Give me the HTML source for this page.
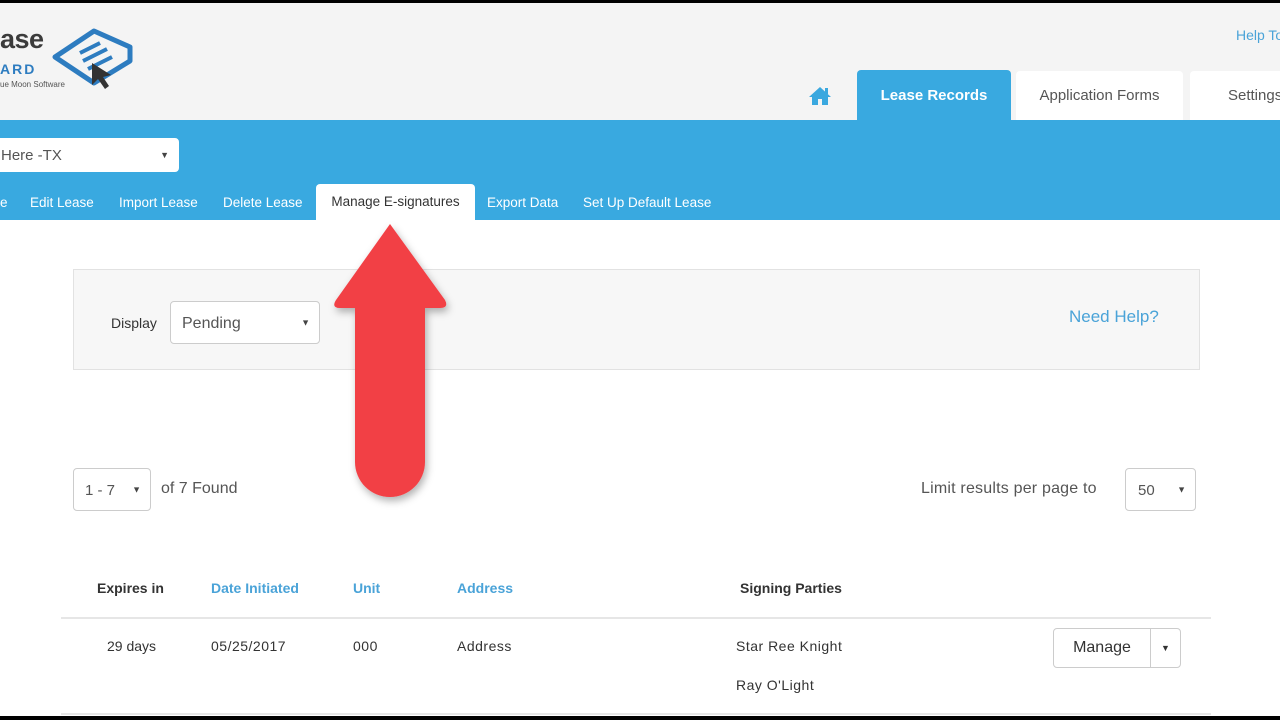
<!DOCTYPE html>
<html><head><style>
*{box-sizing:border-box;margin:0;padding:0}
body{width:1280px;height:720px;overflow:hidden;background:#fff;font-family:"Liberation Sans",sans-serif;position:relative}
.a{position:absolute;white-space:nowrap}
.sel{position:absolute;background:#fff;border:1px solid #ccc;border-radius:4px;color:#555;white-space:nowrap}
.sel .c{position:absolute;right:9px;top:50%;transform:translateY(-50%);font-size:9px;color:#444}
.nav{font-size:13.5px;color:#fff;top:195px}
</style></head><body>
<div class="a" style="left:0;top:0;width:1280px;height:3px;background:#000"></div>
<div class="a" style="left:0;top:3px;width:1280px;height:117px;background:#f4f4f4"></div>
<div class="a" style="left:0;top:24px;font-size:27px;font-weight:bold;color:#3b3b3b;letter-spacing:-0.5px">ase</div>
<div class="a" style="left:0;top:61px;font-size:14px;font-weight:bold;color:#2d7cc0;letter-spacing:2px">ARD</div>
<div class="a" style="left:0;top:80px;font-size:8px;color:#555">ue Moon Software</div>
<svg class="a" style="left:50px;top:25px" width="85" height="70" viewBox="0 0 85 70">
<path d="M5 32 L44 6 L80 22 L80 36 L44 58 Z" fill="none" stroke="#2d7cc0" stroke-width="5" stroke-linejoin="round"/>
<path d="M30 28 L50 18 M33 36 L57 24 M38 44 L62 32" stroke="#2d7cc0" stroke-width="4"/>
<path d="M42 38 L42 60 L48 54 L55 64 L59 61 L53 52 L61 50 Z" fill="#333"/>
</svg>
<div class="a" style="left:1236px;top:27px;font-size:14px;color:#4aa3d8">Help To</div>
<svg class="a" style="left:808px;top:86px" width="24" height="20" viewBox="0 0 24 20"><path d="M12 1 L1 11 L4 11 L4 19 L10 19 L10 13 L14 13 L14 19 L20 19 L20 11 L23 11 Z" fill="#3aa8df"/><rect x="17" y="2" width="3" height="6" fill="#3aa8df"/></svg>
<div class="a" style="left:857px;top:70px;width:154px;height:52px;background:#39a9e0;border-radius:4px 4px 0 0;color:#fff;font-weight:bold;font-size:15px;text-align:center;line-height:52px">Lease Records</div>
<div class="a" style="left:1016px;top:71px;width:167px;height:50px;background:#fff;border-radius:4px 4px 0 0;color:#555;font-size:15px;text-align:center;line-height:50px">Application Forms</div>
<div class="a" style="left:1190px;top:71px;width:100px;height:50px;background:#fff;border-radius:4px 0 0 0;color:#555;font-size:15px;line-height:50px;padding-left:38px">Settings</div>
<div class="a" style="left:0;top:120px;width:1280px;height:100px;background:#39a9e0"></div>
<div class="sel" style="left:-6px;top:138px;width:185px;height:34px;border-color:#fff;font-size:15px;line-height:34px;padding-left:6px">Here -TX<span class="c">▼</span></div>
<div class="a nav" style="left:0">e</div>
<div class="a nav" style="left:30px">Edit Lease</div>
<div class="a nav" style="left:119px">Import Lease</div>
<div class="a nav" style="left:223px">Delete Lease</div>
<div class="a" style="left:316px;top:184px;width:159px;height:36px;background:#fff;border-radius:4px 4px 0 0;color:#333;font-size:13.5px;text-align:center;line-height:36px">Manage E-signatures</div>
<div class="a nav" style="left:487px">Export Data</div>
<div class="a nav" style="left:583px">Set Up Default Lease</div>
<div class="a" style="left:73px;top:269px;width:1127px;height:101px;background:#f7f7f7;border:1px solid #e2e2e2"></div>
<div class="a" style="left:111px;top:315px;font-size:14px;color:#333">Display</div>
<div class="sel" style="left:170px;top:301px;width:150px;height:43px;font-size:16px;line-height:43px;padding-left:11px">Pending<span class="c">▼</span></div>
<div class="a" style="left:1069px;top:307px;font-size:17px;color:#4aa3d8">Need Help?</div>
<div class="sel" style="left:73px;top:468px;width:78px;height:43px;font-size:15px;line-height:43px;padding-left:11px">1 - 7<span class="c">▼</span></div>
<div class="a" style="left:161px;top:480px;font-size:16px;color:#555">of 7 Found</div>
<div class="a" style="left:921px;top:480px;font-size:16px;color:#555;letter-spacing:0.2px">Limit results per page to</div>
<div class="sel" style="left:1125px;top:468px;width:71px;height:43px;font-size:15px;line-height:43px;padding-left:12px">50<span class="c">▼</span></div>
<div class="a" style="left:97px;top:580px;font-size:14px;font-weight:bold;color:#333">Expires in</div>
<div class="a" style="left:211px;top:580px;font-size:14px;font-weight:bold;color:#4aa3d8">Date Initiated</div>
<div class="a" style="left:353px;top:580px;font-size:14px;font-weight:bold;color:#4aa3d8">Unit</div>
<div class="a" style="left:457px;top:580px;font-size:14px;font-weight:bold;color:#4aa3d8">Address</div>
<div class="a" style="left:740px;top:580px;font-size:14px;font-weight:bold;color:#333">Signing Parties</div>
<div class="a" style="left:61px;top:617px;width:1150px;height:2px;background:#e6e6e6"></div>
<div class="a" style="left:107px;top:638px;font-size:14px;color:#333">29 days</div>
<div class="a" style="left:211px;top:638px;font-size:14px;color:#333;letter-spacing:0.5px">05/25/2017</div>
<div class="a" style="left:353px;top:638px;font-size:14px;color:#333;letter-spacing:0.5px">000</div>
<div class="a" style="left:457px;top:638px;font-size:14px;color:#333;letter-spacing:0.5px">Address</div>
<div class="a" style="left:736px;top:638px;font-size:14px;color:#333;letter-spacing:0.5px">Star Ree Knight</div>
<div class="a" style="left:736px;top:677px;font-size:14px;color:#333;letter-spacing:0.5px">Ray O'Light</div>
<div class="a" style="left:1053px;top:628px;width:98px;height:40px;border:1px solid #ccc;border-radius:4px 0 0 4px;font-size:16px;color:#333;text-align:center;line-height:38px">Manage</div>
<div class="a" style="left:1150px;top:628px;width:31px;height:40px;border:1px solid #ccc;border-radius:0 4px 4px 0;font-size:9px;color:#333;text-align:center;line-height:38px">▼</div>
<div class="a" style="left:61px;top:713px;width:1150px;height:2px;background:#e6e6e6"></div>
<div class="a" style="left:0;top:716px;width:1280px;height:4px;background:#000"></div>
<svg class="a" style="left:320px;top:215px" width="145" height="300" viewBox="320 215 145 300">
<defs><filter id="s"><feDropShadow dx="2" dy="4" stdDeviation="4" flood-opacity="0.3"/></filter></defs>
<path d="M390 224 L445 300 Q449 308 440 308 L425 308 L425 462 A35 35 0 0 1 355 462 L355 308 L340 308 Q331 308 336 300 Z" fill="#f23f45" filter="url(#s)"/>
</svg>
</body></html>
